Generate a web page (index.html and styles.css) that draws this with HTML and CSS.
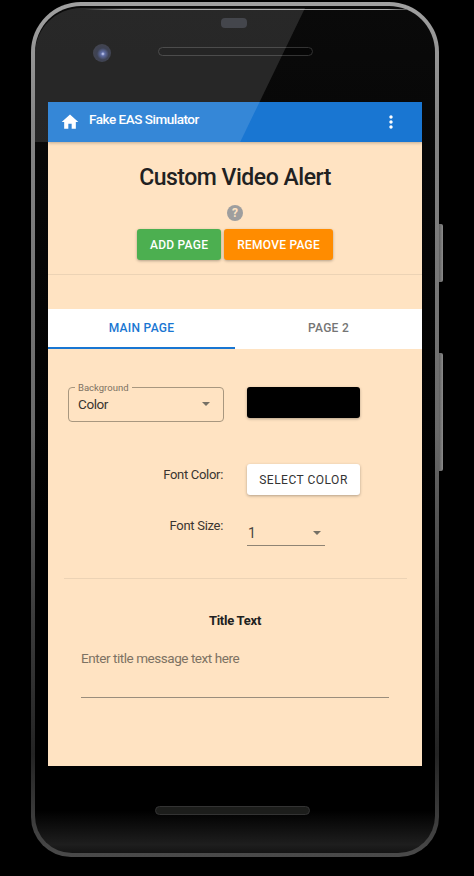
FILE: index.html
```html
<!DOCTYPE html>
<html lang="en">
<head>
    <meta charset="UTF-8">
    <meta name="viewport" content="width=device-width, initial-scale=1.0">
    <title>Custom Video Alert</title>
    <link rel="stylesheet" href="styles.css">
</head>
<body>

<div class="phone">
    <span class="side-btn side-power"></span>
    <span class="side-btn side-volume"></span>
    <div class="bezel">
        <span class="edge-line"></span>
        <div class="bezel-top">
            <span class="sensor"></span>
            <div class="top-row">
                <span class="camera"></span>
                <span class="speaker"></span>
            </div>
        </div>

        <div class="screen">
            <header class="app-bar">
                <svg class="home-icon" viewBox="0 0 24 24"><path d="M10 20v-6h4v6h5v-8h3L12 3 2 12h3v8z"/></svg>
                <span class="app-title">Fake EAS Simulator</span>
                <svg class="more-icon" viewBox="0 0 24 24"><path d="M12 8c1.1 0 2-.9 2-2s-.9-2-2-2-2 .9-2 2 .9 2 2 2zm0 2c-1.1 0-2 .9-2 2s.9 2 2 2 2-.9 2-2-.9-2-2-2zm0 6c-1.1 0-2 .9-2 2s.9 2 2 2 2-.9 2-2-.9-2-2-2z"/></svg>
            </header>

            <h1 class="page-title">Custom Video Alert</h1>
            <div class="help"><span class="help-icon">?</span></div>
            <div class="page-actions">
                <button class="btn btn-green">Add Page</button>
                <button class="btn btn-orange">Remove Page</button>
            </div>
            <hr class="rule rule-full">

            <nav class="tabs">
                <a class="tab tab-active">Main Page</a>
                <a class="tab">Page 2</a>
            </nav>

            <div class="form-row row-background">
                <div class="outlined">
                    <span class="outlined-label">Background</span>
                    <span class="outlined-value">Color</span>
                    <span class="caret"></span>
                </div>
                <button class="btn swatch"></button>
            </div>

            <div class="form-row row-color">
                <label class="form-label">Font Color:</label>
                <button class="btn btn-white">Select Color</button>
            </div>

            <div class="form-row row-size">
                <label class="form-label">Font Size:</label>
                <div class="plain-select">
                    <span>1</span>
                    <span class="caret"></span>
                </div>
            </div>

            <hr class="rule rule-inset">

            <h2 class="section-title">Title Text</h2>
            <div class="text-field">Enter title message text here</div>
        </div>

        <div class="bezel-bottom">
            <span class="speaker speaker-bottom"></span>
        </div>
    </div>
    <div class="glare"></div>
</div>

</body>
</html>
```

FILE: styles.css
```css
* {
    box-sizing: border-box;
}
html, body {
    margin: 0;
    padding: 0;
    height: 876px;
    overflow: hidden;
    background-color: #000;
    font-family: Roboto, "Liberation Sans", sans-serif;
}
.phone {
    position: relative;
    width: 408px;
    height: 855px;
    margin: 2px 0 0 31px;
    padding: 4px;
    border-radius: 50px 50px 40px 40px;
    background: linear-gradient(#a0a0a0, #868686 14%, #6a6a6a 50%, #3c3c3c 72%, #242424 88%, #4a4a4a);
}
.bezel {
    position: relative;
    height: 100%;
    padding: 0 13px;
    border-radius: 46px 46px 37px 37px;
    background: linear-gradient(#0a0a0a, #000 60%, #000 95%, #1e1e1e 99%, #141414);
    overflow: hidden;
}
.edge-line {
    position: absolute;
    top: 3px;
    left: 50px;
    right: 14px;
    height: 1px;
    background: linear-gradient(90deg, transparent, #999 12%, #aaa 90%, transparent);
}
.glare {
    position: absolute;
    top: 6px;
    left: 4px;
    width: 270px;
    height: 134px;
    border-top-left-radius: 46px;
    background-color: rgba(255, 255, 255, 0.125);
    clip-path: polygon(0 0, 100% 0, 76% 100%, 0 100%);
    pointer-events: none;
}
.side-btn {
    position: absolute;
    right: -4px;
    width: 4px;
    background: linear-gradient(90deg, #5f5f5f, #8c8c8c);
    border-radius: 0 2px 2px 0;
}
.side-power {
    top: 222px;
    height: 58px;
}
.side-volume {
    top: 351px;
    height: 118px;
}

/* parte de arriba del telefono */
.bezel-top {
    height: 96px;
    padding-top: 12px;
}
.sensor {
    display: block;
    width: 26px;
    height: 10px;
    margin-left: 173px;
    border-radius: 4px;
    background-color: #2a2c33;
}
.top-row {
    display: flex;
    align-items: center;
    margin-top: 13px;
    padding-left: 45px;
}
.camera {
    width: 18px;
    height: 18px;
    margin-top: 3px;
    border-radius: 50%;
    background: radial-gradient(circle at 55% 55%, #cfd6ff 0, #4a5a9a 14%, #23283c 42%, #2c2d33 100%);
}
.speaker {
    display: block;
    width: 155px;
    height: 9px;
    border-radius: 5px;
    background-color: #060606;
    border: 1px solid #333;
}
.top-row .speaker {
    margin-left: 47px;
}
.speaker-bottom {
    margin-left: 107px;
    background-color: #1c1d1b;
}
.bezel-bottom {
    padding-top: 40px;
}

/* pantalla */
.screen {
    width: 374px;
    height: 664px;
    background-color: #ffe3c2;
    color: #212121;
    overflow: hidden;
}
.app-bar {
    display: flex;
    align-items: center;
    height: 40px;
    padding: 0 21px 0 12px;
    background-color: #1976d2;
    color: #fff;
    box-shadow: 0 1px 3px rgba(0, 0, 0, 0.25);
}
.home-icon {
    width: 20px;
    height: 20px;
    fill: #fff;
}
.more-icon {
    width: 20px;
    height: 20px;
    fill: #fff;
    margin-left: auto;
}
.app-title {
    margin: -6px 0 0 9px;
    font-size: 13.5px;
    font-weight: 500;
    letter-spacing: -0.48px;
}
.page-title {
    margin: 22px 0 0;
    font-size: 23px;
    line-height: 28px;
    font-weight: 500;
    letter-spacing: -0.48px;
    text-align: center;
}
.help {
    display: flex;
    justify-content: center;
    margin-top: 13px;
}
.help-icon {
    width: 16px;
    height: 16px;
    border-radius: 50%;
    background-color: #9e9e9e;
    color: #ffe3c2;
    font-size: 12px;
    font-weight: 700;
    line-height: 16px;
    text-align: center;
}
.page-actions {
    display: flex;
    justify-content: center;
    gap: 3px;
    margin-top: 8px;
}
.btn {
    height: 31px;
    padding: 0 13px;
    border: none;
    border-radius: 3px;
    font-family: inherit;
    font-size: 12px;
    font-weight: 500;
    letter-spacing: 0.25px;
    text-transform: uppercase;
    box-shadow: 0 1px 3px rgba(0, 0, 0, 0.3);
}
.btn-green {
    background-color: #4caf50;
    color: #fff;
}
.btn-orange {
    background-color: #ff8c00;
    color: #fff;
}
.btn-white {
    width: 113px;
    padding: 0;
    background-color: #fff;
    color: #333;
    font-weight: 400;
    letter-spacing: 0.5px;
}
.swatch {
    width: 113px;
    background-color: #000;
}
.rule {
    height: 1px;
    margin: 0;
    border: none;
    background-color: #ecd3b5;
}
.rule-full {
    margin-top: 14px;
}
.rule-inset {
    margin: 32px 15px 0 16px;
}

/* pestañas */
.tabs {
    display: flex;
    height: 40px;
    margin-top: 34px;
    background-color: #fff;
}
.tab {
    flex: 1;
    font-size: 12px;
    font-weight: 500;
    letter-spacing: 0.3px;
    line-height: 39px;
    text-align: center;
    text-transform: uppercase;
    color: #757575;
}
.tab-active {
    color: #1976d2;
    border-bottom: 2px solid #1976d2;
}

/* formulario */
.form-row {
    display: flex;
    padding-left: 20px;
}
.row-background {
    gap: 23px;
    margin-top: 38px;
}
.row-color {
    gap: 24px;
    margin-top: 42px;
}
.row-size {
    gap: 24px;
    margin-top: 21px;
}
.row-color .form-label {
    padding-top: 1px;
}
.form-label {
    width: 155px;
    font-size: 13px;
    line-height: 20px;
    letter-spacing: -0.3px;
    text-align: right;
    color: #3a3530;
}
.outlined {
    position: relative;
    display: flex;
    align-items: center;
    width: 156px;
    height: 35px;
    padding: 0 9px 1px;
    border: 1px solid #a8977f;
    border-radius: 4px;
}
.outlined-label {
    position: absolute;
    top: -6px;
    left: 6px;
    padding: 0 3px;
    background-color: #ffe3c2;
    color: #7d7263;
    font-size: 9.5px;
    line-height: 12px;
}
.outlined-value {
    font-size: 13.5px;
    letter-spacing: -0.4px;
    color: #3a3530;
}
.caret {
    width: 0;
    height: 0;
    margin-left: auto;
    margin-right: 4px;
    border-left: 4px solid transparent;
    border-right: 4px solid transparent;
    border-top: 4px solid #757065;
}
.plain-select {
    display: flex;
    align-items: center;
    width: 78px;
    height: 31px;
    margin-top: -1px;
    padding: 5px 0 0 1px;
    border-bottom: 1px solid #8f8474;
    font-size: 14px;
    color: #4a4540;
}
.section-title {
    margin: 34px 0 0;
    font-size: 13px;
    line-height: 16px;
    font-weight: 700;
    letter-spacing: -0.25px;
    text-align: center;
}
.text-field {
    height: 48px;
    margin: 21px 33px 0;
    border-bottom: 1px solid #9a8d7c;
    color: #7d7263;
    font-size: 13.5px;
    letter-spacing: -0.45px;
    line-height: 16px;
}
```
